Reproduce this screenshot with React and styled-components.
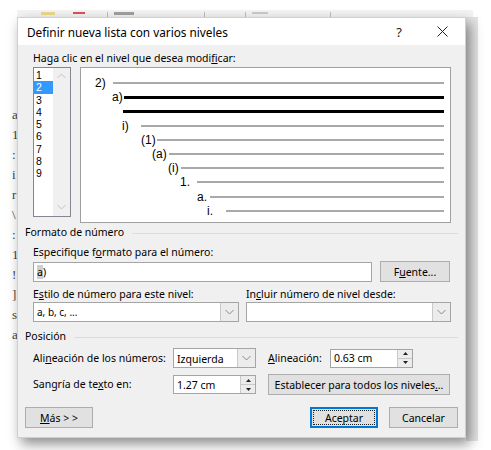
import styled, { createGlobalStyle } from "styled-components";

const GlobalStyle = createGlobalStyle`
  html, body {
    margin: 0;
    padding: 0;
    background: #fff;
  }
  body {
    font-family: "Noto Sans", "Segoe UI", sans-serif;
    font-size: 10.5px;
    color: #000;
  }
`;

const Page = styled.div`
  position: relative;
  width: 491px;
  height: 450px;
  overflow: hidden;
  box-sizing: border-box;
  padding: 17px 0 0 17px;
`;

/* the Word window that lies behind the dialog */
const Ribbon = styled.div`
  position: absolute;
  top: 10px;
  left: 17px;
  width: 456px;
  height: 7px;
  background: #f3f3f3;
  display: flex;
  align-items: flex-start;
`;
const Chip = styled.div`
  margin-left: ${(p) => p.$gap}px;
  width: ${(p) => p.$w}px;
  height: ${(p) => p.$h || 3}px;
  margin-top: 2px;
  background: ${(p) => p.$color};
`;
const DocLetters = styled.div`
  position: absolute;
  top: 108px;
  left: 12px;
  display: flex;
  flex-direction: column;
  gap: 6px;
  font-family: "Liberation Serif", serif;
  font-size: 13px;
  line-height: 14px;
  color: #444;
`;
const DocColumn = styled.div`
  position: absolute;
  top: 17px;
  left: 466px;
  width: 12px;
  height: 424px;
  background: #e4e4e4;
`;

const Dialog = styled.div`
  position: relative;
  z-index: 1;
  width: 449px;
  height: 421px;
  box-sizing: border-box;
  border: 1px solid #dcd2a6;
  background: #f0f0f0;
  box-shadow: 4px 6px 12px rgba(0, 0, 0, 0.45);
  display: flex;
  flex-direction: column;
`;

const TitleBar = styled.div`
  height: 27px;
  background: #fff;
  display: flex;
  align-items: center;
  padding-left: 9px;
`;
const Title = styled.div`
  flex: 1;
  font-size: 11.8px;
`;
const TitleButton = styled.div`
  width: ${(p) => p.$w}px;
  height: 27px;
  display: flex;
  align-items: center;
  justify-content: center;
  font-size: 13px;
  color: #222;
`;

const Body = styled.div`
  padding: 6px 14px 0 7px;
  display: flex;
  flex-direction: column;
`;
const Indent = styled.div`
  padding-left: 8px;
  margin-top: ${(p) => p.$mt || 0}px;
  display: flex;
  flex-direction: column;
`;
const Label = styled.div`
  line-height: 15px;
  height: 15px;
  white-space: nowrap;
  margin-top: ${(p) => p.$mt || 0}px;
`;
const U = styled.span`
  text-decoration: underline;
  text-underline-offset: 1px;
`;

const LevelRow = styled.div`
  display: flex;
  gap: 9px;
  margin-top: 1px;
`;
const LevelList = styled.div`
  width: 38px;
  height: 150px;
  box-sizing: border-box;
  border: 1px solid #828790;
  background: #fff;
  display: flex;
`;
const LevelItems = styled.div`
  width: 19px;
  padding-top: 1px;
  display: flex;
  flex-direction: column;
`;
const LevelItem = styled.div`
  height: 12.25px;
  line-height: 12.25px;
  padding-left: 2px;
  font-family: "Liberation Sans", Arial, sans-serif;
  font-size: 10.5px;
  background: ${(p) => (p.$selected ? "#3399ff" : "transparent")};
  color: ${(p) => (p.$selected ? "#fff" : "#000")};
`;
const ScrollBar = styled.div`
  flex: 1;
  background: #f0f0f0;
  display: flex;
  flex-direction: column;
  justify-content: space-between;
  align-items: center;
  padding: 5px 0 6px;
`;

const Preview = styled.div`
  width: 371px;
  height: 156px;
  box-sizing: border-box;
  border: 1px solid #a0a0a0;
  background: #fff;
  padding: 8px 6px 0 0;
`;
const PreviewRow = styled.div`
  height: 14.2px;
  display: flex;
  align-items: center;
  padding-left: ${(p) => p.$indent}px;
`;
const NumLabel = styled.div`
  width: ${(p) => p.$w}px;
  flex-shrink: 0;
  font-family: "Liberation Sans", Arial, sans-serif;
  font-size: 12px;
  line-height: 14px;
`;
const Rule = styled.div`
  flex: 1;
  height: ${(p) => (p.$bold ? 3 : 2)}px;
  background: ${(p) => (p.$bold ? "#000" : "#a9a9a9")};
`;

const SectionHeader = styled.div`
  display: flex;
  align-items: center;
  line-height: 15px;
  height: 15px;
  margin-top: ${(p) => p.$mt}px;
  &::after {
    content: "";
    flex: 1;
    height: 1px;
    margin: 1px -7px 0 8px;
    background: #dcdcdc;
  }
`;

const FieldRow = styled.div`
  display: flex;
  align-items: center;
  gap: 8px;
  margin-top: 1px;
`;
const TextBox = styled.div`
  width: ${(p) => p.$w}px;
  height: 20px;
  box-sizing: border-box;
  border: 1px solid #a5a5a5;
  background: #fff;
  display: flex;
  align-items: center;
  padding-left: 3px;
`;
const Sel = styled.span`
  background: #cfcfcf;
`;
const Button = styled.button`
  position: relative;
  width: ${(p) => p.$w}px;
  height: 21px;
  box-sizing: border-box;
  padding: 0;
  border: 1px solid ${(p) => (p.$default ? "#0078d7" : "#adadad")};
  box-shadow: ${(p) => (p.$default ? "inset 0 0 0 1px #0078d7" : "none")};
  background: #e1e1e1;
  font: inherit;
  color: #000;
  white-space: nowrap;
  ${(p) =>
    p.$default &&
    `&::after {
      content: "";
      position: absolute;
      inset: 2px;
      border: 1px dotted #222;
    }`}
`;

const LabelPair = styled.div`
  display: grid;
  grid-template-columns: 206px 205px;
  column-gap: 7px;
  margin-top: ${(p) => p.$mt || 0}px;
`;
const Combo = styled.div`
  height: ${(p) => p.$h || 20}px;
  box-sizing: border-box;
  border: 1px solid #a5a5a5;
  background: #fff;
  display: flex;
  align-items: stretch;
`;
const ComboValue = styled.div`
  flex: 1;
  display: flex;
  align-items: ${(p) => (p.$low ? "flex-end" : "center")};
  padding: 0 0 ${(p) => (p.$low ? 1 : 0)}px 3px;
  white-space: nowrap;
  font-size: ${(p) => p.$fs || 10.5}px;
`;
const ComboArrow = styled.div`
  width: 17px;
  border-left: 1px solid #c9c9c9;
  background: #ececec;
  display: flex;
  align-items: center;
  justify-content: center;
`;
const SpinButtons = styled.div`
  width: 14px;
  border-left: 1px solid #c9c9c9;
  background: #ececec;
  display: flex;
  flex-direction: column;
`;
const SpinHalf = styled.div`
  flex: 1;
  display: flex;
  align-items: center;
  justify-content: center;
  &:first-child {
    border-bottom: 1px solid #c9c9c9;
  }
`;

const PosGrid = styled.div`
  display: grid;
  grid-template-columns: 140px 83px 74px 83px;
  row-gap: 6px;
  margin-top: 4px;
  align-items: center;
  & > :nth-child(4n + 3) {
    padding-left: 12px;
  }
`;
const Wide = styled.div`
  grid-column: 3 / span 2;
  padding-left: 12px;
`;

const Footer = styled.div`
  display: flex;
  gap: 11px;
  margin-top: 12px;
  margin-right: -7px;
`;
const Spacer = styled.div`
  flex: 1;
`;

function Chevron({ up, color = "#8a8a8a" }) {
  return (
    <svg width="9" height="6" viewBox="0 0 9 6">
      <polyline
        points={up ? "0.5,5 4.5,1 8.5,5" : "0.5,1 4.5,5 8.5,1"}
        fill="none"
        stroke={color}
        strokeWidth="1"
      />
    </svg>
  );
}

function Triangle({ up }) {
  return (
    <svg width="5" height="3" viewBox="0 0 5 3">
      <polygon points={up ? "0,3 5,3 2.5,0" : "0,0 5,0 2.5,3"} fill="#222" />
    </svg>
  );
}

function CloseGlyph() {
  return (
    <svg width="11" height="11" viewBox="0 0 11 11">
      <path d="M0.5 0.5 L10.5 10.5 M10.5 0.5 L0.5 10.5" stroke="#222" strokeWidth="1" />
    </svg>
  );
}

function Spin({ value }) {
  return (
    <Combo $h={19}>
      <ComboValue>{value}</ComboValue>
      <SpinButtons>
        <SpinHalf>
          <Triangle up />
        </SpinHalf>
        <SpinHalf>
          <Triangle />
        </SpinHalf>
      </SpinButtons>
    </Combo>
  );
}

const previewRows = [
  { label: "2)", indent: 14, start: 32 },
  { label: "a)", indent: 31, start: 43, bold: true },
  { label: "", indent: 42, start: 42, bold: true },
  { label: "i)", indent: 41, start: 60 },
  { label: "(1)", indent: 60, start: 76 },
  { label: "(a)", indent: 71, start: 88 },
  { label: "(i)", indent: 87, start: 100 },
  { label: "1.", indent: 99, start: 116 },
  { label: "a.", indent: 116, start: 129 },
  { label: "i.", indent: 126, start: 145 },
];

const levels = ["1", "2", "3", "4", "5", "6", "7", "8", "9"];
const docLetters = ["a", "1", ":", "i", "r", "\\", ":", "1", "!", "]", "s", "a"];

export default function App() {
  return (
    <>
      <GlobalStyle />
      <Page>
        <Ribbon>
          <Chip $gap={24} $w={14} $color="#e9d98a" />
          <Chip $gap={18} $w={12} $color="#d9534f" $h={2} />
          <Chip $gap={22} $w={1} $color="#bbb" $h={7} />
          <Chip $gap={6} $w={20} $color="#a0a0a0" />
          <Chip $gap={70} $w={1} $color="#bbb" $h={7} />
          <Chip $gap={40} $w={1} $color="#bbb" $h={7} />
          <Chip $gap={6} $w={16} $color="#c9c9c9" $h={2} />
          <Chip $gap={62} $w={1} $color="#bbb" $h={7} />
        </Ribbon>
        <DocLetters>
          {docLetters.map((l, i) => (
            <span key={i}>{l}</span>
          ))}
        </DocLetters>
        <DocColumn />

        <Dialog>
          <TitleBar>
            <Title>Definir nueva lista con varios niveles</Title>
            <TitleButton $w={40}>?</TitleButton>
            <TitleButton $w={46}>
              <CloseGlyph />
            </TitleButton>
          </TitleBar>

          <Body>
            <Indent>
              <Label>
                Haga clic en el nivel que desea modi<U>f</U>icar:
              </Label>
              <LevelRow>
                <LevelList>
                  <LevelItems>
                    {levels.map((n) => (
                      <LevelItem key={n} $selected={n === "2"}>
                        {n}
                      </LevelItem>
                    ))}
                  </LevelItems>
                  <ScrollBar>
                    <Chevron up color="#c2c2c2" />
                    <Chevron color="#c2c2c2" />
                  </ScrollBar>
                </LevelList>
                <Preview>
                  {previewRows.map((r, i) => (
                    <PreviewRow key={i} $indent={r.indent}>
                      <NumLabel $w={r.start - r.indent}>{r.label}</NumLabel>
                      <Rule $bold={r.bold} />
                    </PreviewRow>
                  ))}
                </Preview>
              </LevelRow>
            </Indent>

            <SectionHeader $mt={2}>Formato de número</SectionHeader>
            <Indent $mt={5}>
              <Label>
                Especifique f<U>o</U>rmato para el número:
              </Label>
              <FieldRow>
                <TextBox $w={339}>
                  <Sel>a</Sel>)
                </TextBox>
                <Button $w={70}>
                  F<U>u</U>ente...
                </Button>
              </FieldRow>
              <LabelPair $mt={5}>
                <Label>
                  E<U>s</U>tilo de número para este nivel:
                </Label>
                <Label>
                  In<U>c</U>luir número de nivel desde:
                </Label>
              </LabelPair>
              <LabelPair>
                <Combo>
                  <ComboValue $fs={10}>a, b, c, ...</ComboValue>
                  <ComboArrow>
                    <Chevron />
                  </ComboArrow>
                </Combo>
                <Combo>
                  <ComboValue />
                  <ComboArrow>
                    <Chevron />
                  </ComboArrow>
                </Combo>
              </LabelPair>
            </Indent>

            <SectionHeader $mt={7}>Posición</SectionHeader>
            <Indent>
              <PosGrid>
                <Label>
                  Ali<U>n</U>eación de los números:
                </Label>
                <Combo $h={20}>
                  <ComboValue $low>Izquierda</ComboValue>
                  <ComboArrow>
                    <Chevron />
                  </ComboArrow>
                </Combo>
                <Label>
                  <U>A</U>lineación:
                </Label>
                <Spin value="0.63 cm" />
                <Label>
                  Sangría de te<U>x</U>to en:
                </Label>
                <Spin value="1.27 cm" />
                <Wide>
                  <Button $w={182}>
                    Establecer para todos los niveles<U>.</U>..
                  </Button>
                </Wide>
              </PosGrid>
            </Indent>

            <Footer>
              <Button $w={68}>
                <U>M</U>ás &gt; &gt;
              </Button>
              <Spacer />
              <Button $w={68} $default>
                Aceptar
              </Button>
              <Button $w={69}>Cancelar</Button>
            </Footer>
          </Body>
        </Dialog>
      </Page>
    </>
  );
}
